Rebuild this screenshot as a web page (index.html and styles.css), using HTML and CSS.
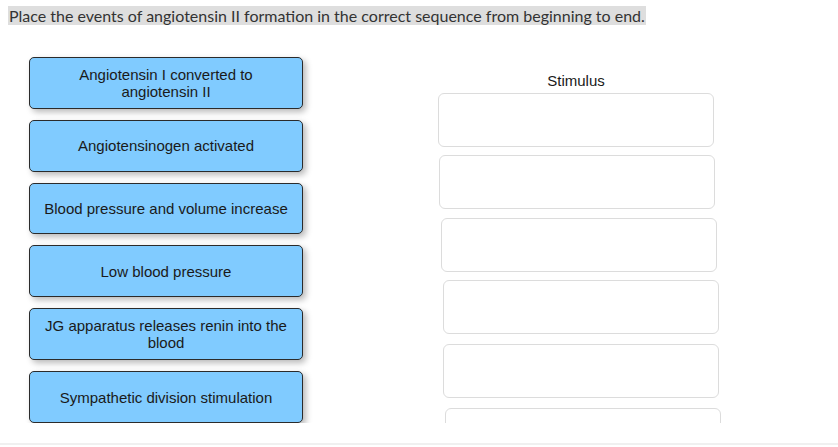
FILE: index.html
```html
<!doctype html>
<html>
<head>
<meta charset="utf-8">
<link rel="stylesheet" href="styles.css">
<title>Sequence question</title>
</head>
<body>
<p class="prompt"><span>Place the events of angiotensin II formation in the correct sequence from beginning to end.</span></p>

<div class="board">
  <ul class="choices">
    <li class="card">Angiotensin I converted to<br>angiotensin II</li>
    <li class="card">Angiotensinogen activated</li>
    <li class="card">Blood pressure and volume increase</li>
    <li class="card">Low blood pressure</li>
    <li class="card">JG apparatus releases renin into the<br>blood</li>
    <li class="card">Sympathetic division stimulation</li>
  </ul>

  <div class="targets">
    <h3>Stimulus</h3>
    <ol class="slots">
      <li class="slot"></li>
      <li class="slot"></li>
      <li class="slot"></li>
      <li class="slot"></li>
      <li class="slot"></li>
      <li class="slot"></li>
    </ol>
  </div>
</div>

<div class="footer"></div>
</body>
</html>
```

FILE: styles.css
```css
body {
    margin: 0;
    background: #fff;
    font-family: "Liberation Sans", Arial, sans-serif;
    color: #1a1a1a;
}

.prompt {
    margin: 0;
    padding: 7px 0 0 8px;
    height: 40px;
    box-sizing: border-box;
    font-family: Lato, "Open Sans", sans-serif;
    font-size: 16px;
    line-height: 18px;
    color: #333;
}
.prompt span {
    background: #dedede;
    padding: 0 1px;
}

.board {
    display: flex;
    height: 383px;
    overflow: hidden;
}

.choices {
    list-style: none;
    margin: 0;
    padding: 17px 0 0 29px;
    width: 274px;
    display: flex;
    flex-direction: column;
    gap: 11px;
}
.card {
    height: 52px;
    box-sizing: border-box;
    display: flex;
    align-items: center;
    justify-content: center;
    text-align: center;
    background: #80cbff;
    border: 1px solid #2b2b2b;
    border-radius: 5px;
    box-shadow: 3px 3px 6px rgba(0, 0, 0, 0.28);
    font-size: 15px;
    line-height: 17px;
    padding: 0 8px;
}

.targets {
    margin-left: 135px;
    width: 282px;
}
.targets h3 {
    margin: 32px 0 0;
    width: 276px;
    text-align: center;
    font-size: 15px;
    font-weight: normal;
    line-height: 17px;
}
.slots {
    list-style: none;
    margin: 4px 0 0;
    padding: 0;
    display: flex;
    flex-direction: column;
    gap: 9px;
}
.slot {
    width: 276px;
    height: 54px;
    box-sizing: border-box;
    border: 1px solid #dcdcdc;
    border-radius: 6px;
    background: #fff;
}
.slot:nth-child(2) { margin-left: 1px; margin-top: -1px; }
.slot:nth-child(3) { margin-left: 3px; }
.slot:nth-child(4) { margin-left: 5px; margin-top: -1px; }
.slot:nth-child(5) { margin-left: 5px; margin-top: 1px; }
.slot:nth-child(6) { margin-left: 7px; margin-top: 1px; }

.footer {
    margin-top: 20px;
    border-top: 2px solid #f0f0f0;
}
```
